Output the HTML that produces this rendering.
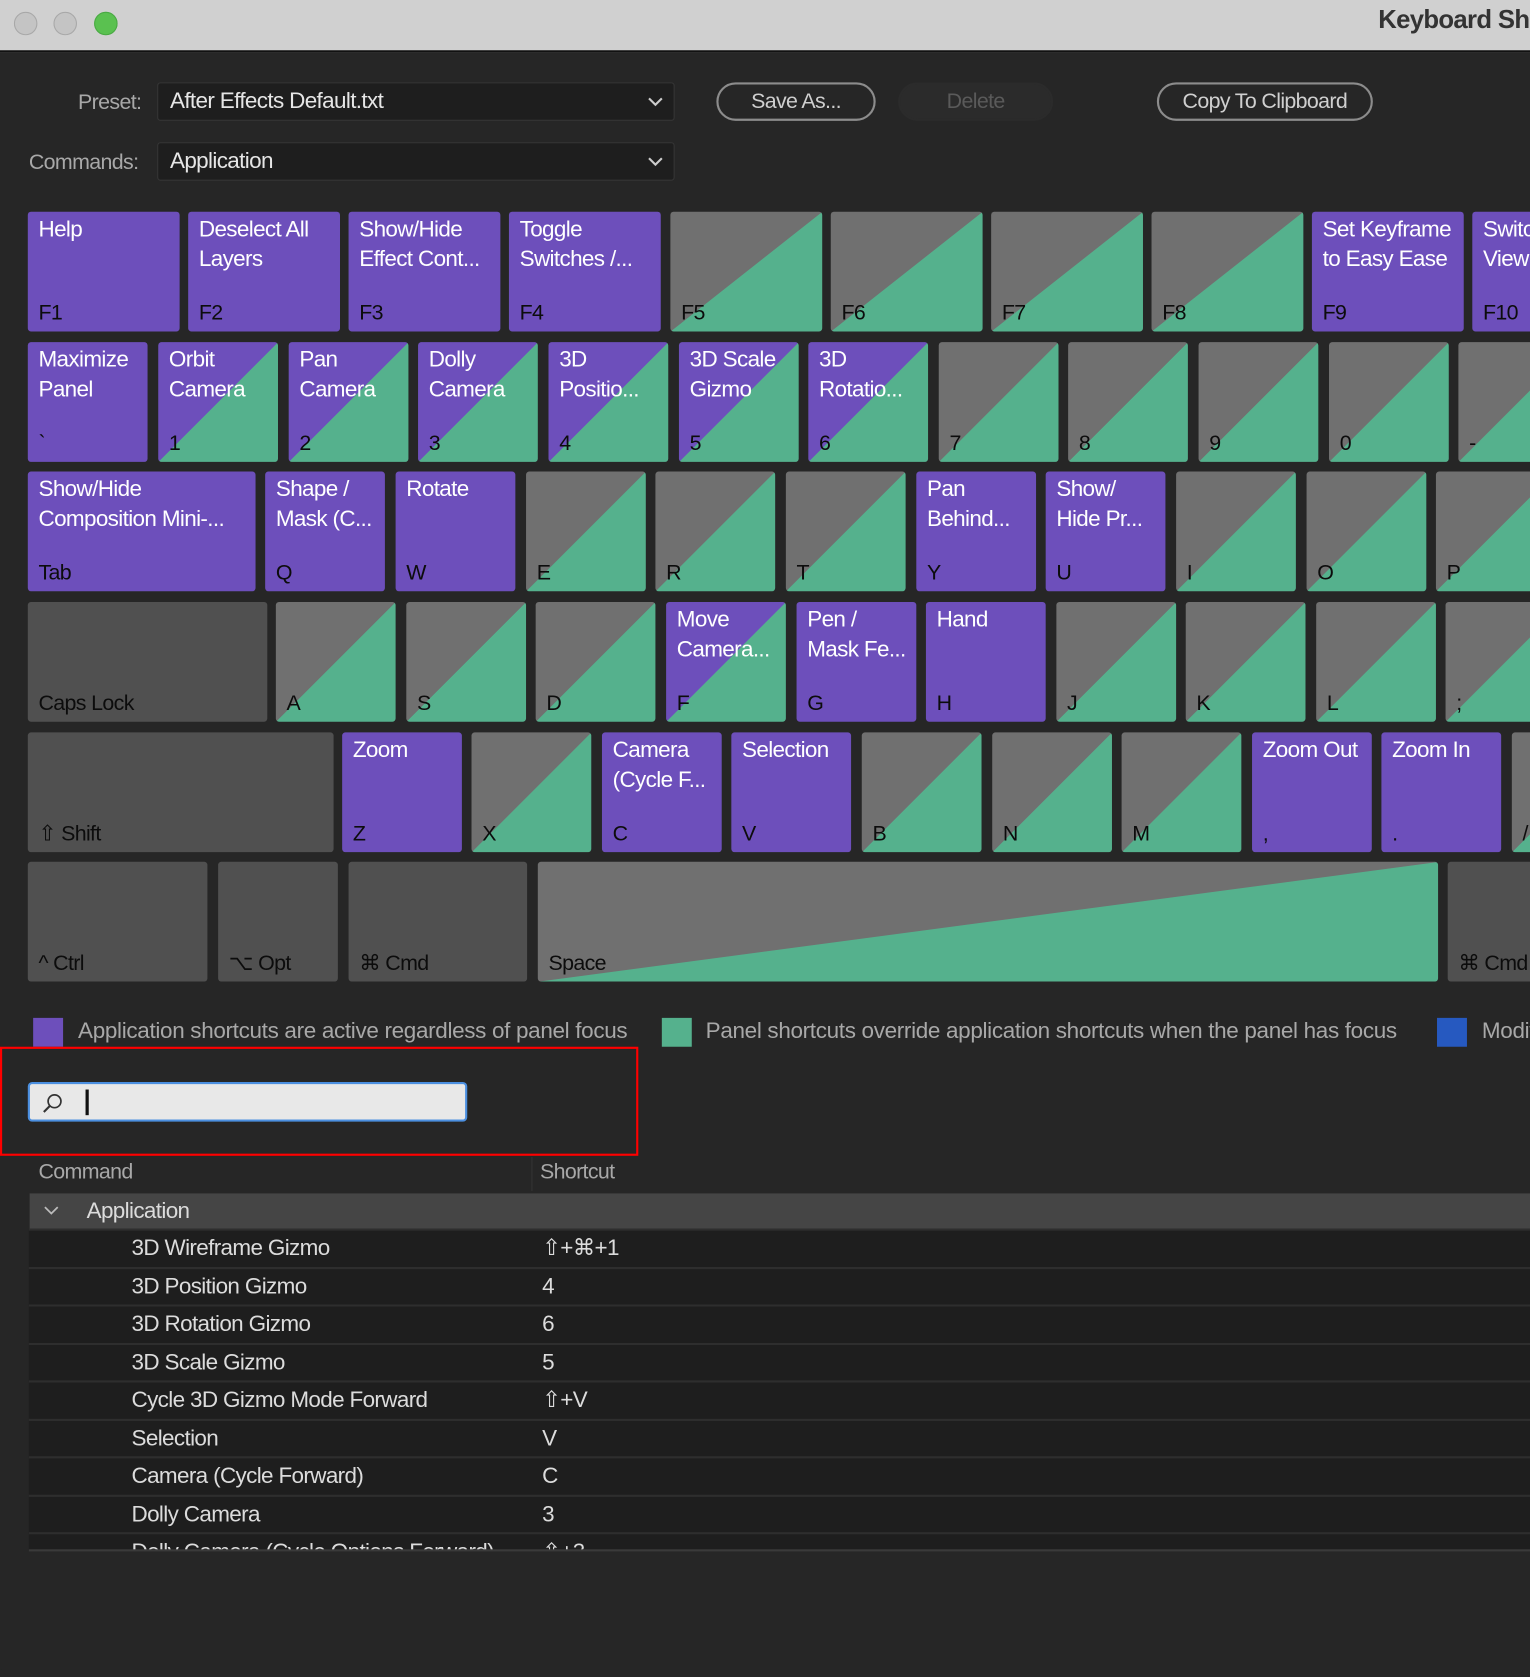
<!DOCTYPE html>
<html><head><meta charset="utf-8"><style>
html,body{margin:0;padding:0;background:#262626;overflow:hidden}
body{width:1530px;height:1676px}
#w{position:absolute;left:0;top:0;width:1431px;height:1568px;transform:scale(1.0692);transform-origin:0 0;background:#262626;font-family:"Liberation Sans","DejaVu Sans",sans-serif;letter-spacing:-0.6px;overflow:hidden;border-bottom-left-radius:12px}
.a{position:absolute}
#tb{left:0;top:0;width:1431px;height:47px;background:#d0d0d0;border-bottom:2px solid #111}
.tl{position:absolute;top:11px;width:22px;height:22px;border-radius:50%;background:#c4c4c4;box-shadow:inset 0 0 0 1px #a8a8a8}
.lbl{color:#a8a8a8;font-size:20px}
.dd{position:absolute;left:147px;width:484px;height:36px;background:#1e1e1e;border:1px solid #353535;border-radius:3px;box-sizing:border-box;color:#e6e6e6;font-size:21px;line-height:34px;padding-left:11px}
.dd svg{position:absolute;right:9px;top:12px}
.btn{position:absolute;top:77px;height:36px;box-sizing:border-box;border:2px solid #8c8c8c;border-radius:18px;color:#cfcfcf;font-size:20px;line-height:32px;text-align:center}
.k{position:absolute;height:112px;border-radius:3px;overflow:hidden;box-sizing:border-box}
.k .t{position:absolute;left:10px;top:3px;right:4px;color:#fff;font-size:21px;line-height:28px;white-space:nowrap}
.k .b{position:absolute;left:10px;bottom:5px;color:#0c0c0c;font-size:20px;line-height:24px;white-space:nowrap}
.p{background:#6d4fbb}
.s{background:linear-gradient(to bottom right,#707070 50%,#55b18d 50.2%)}
.ps{background:linear-gradient(to bottom right,#6d4fbb 50%,#55b18d 50.2%)}
.d{background:#505050}
.sq{position:absolute;top:952px;width:28px;height:27px}
.lg{position:absolute;top:951px;color:#a8a8a8;font-size:21px;line-height:28px;white-space:nowrap;letter-spacing:-0.3px}
.row{position:absolute;left:27px;width:1410px;height:34px;background:#1e1e1e;border-top:2px solid #2e2e2e;color:#dcdcdc;font-size:21px;line-height:34px}
.row span{position:absolute;left:96px}
.row i{position:absolute;left:480px;font-style:normal}
</style></head><body><div id="w">
<div id="tb" class="a">
<div class="tl" style="left:13px"></div><div class="tl" style="left:50px"></div><div class="tl" style="left:88px;background:#5ac150;box-shadow:inset 0 0 0 1px #4aa944"></div>
<div class="a" style="left:1289px;top:5px;font-size:24px;font-weight:bold;color:#333;white-space:nowrap">Keyboard Sh</div>
</div>
<div class="a lbl" style="left:73px;top:85px">Preset:</div>
<div class="dd" style="top:77px">After Effects Default.txt<svg width="16" height="10"><path d="M2 2l6 6 6-6" stroke="#ccc" stroke-width="2" fill="none"/></svg></div>
<div class="a lbl" style="left:27px;top:141px">Commands:</div>
<div class="dd" style="top:133px">Application<svg width="16" height="10"><path d="M2 2l6 6 6-6" stroke="#ccc" stroke-width="2" fill="none"/></svg></div>
<div class="btn" style="left:670px;width:149px">Save As...</div>
<div class="btn" style="left:840px;width:145px;border-color:#2b2b2b;background:#2b2b2b;color:#5a5a5a">Delete</div>
<div class="btn" style="left:1082px;width:202px">Copy To Clipboard</div>

<div class="k p" style="left:26px;top:198px;width:142px"><div class="t">Help</div><div class="b">F1</div></div>
<div class="k p" style="left:176px;top:198px;width:142px"><div class="t">Deselect All<br>Layers</div><div class="b">F2</div></div>
<div class="k p" style="left:326px;top:198px;width:142px"><div class="t">Show/Hide<br>Effect Cont...</div><div class="b">F3</div></div>
<div class="k p" style="left:476px;top:198px;width:142px"><div class="t">Toggle<br>Switches /...</div><div class="b">F4</div></div>
<div class="k s" style="left:627px;top:198px;width:142px"><div class="b">F5</div></div>
<div class="k s" style="left:777px;top:198px;width:142px"><div class="b">F6</div></div>
<div class="k s" style="left:927px;top:198px;width:142px"><div class="b">F7</div></div>
<div class="k s" style="left:1077px;top:198px;width:142px"><div class="b">F8</div></div>
<div class="k p" style="left:1227px;top:198px;width:142px"><div class="t">Set Keyframe<br>to Easy Ease</div><div class="b">F9</div></div>
<div class="k p" style="left:1377px;top:198px;width:142px"><div class="t">Switch<br>View</div><div class="b">F10</div></div>
<div class="k p" style="left:26px;top:320px;width:112px"><div class="t">Maximize<br>Panel</div><div class="b">`</div></div>
<div class="k ps" style="left:148px;top:320px;width:112px"><div class="t">Orbit<br>Camera</div><div class="b">1</div></div>
<div class="k ps" style="left:270px;top:320px;width:112px"><div class="t">Pan<br>Camera</div><div class="b">2</div></div>
<div class="k ps" style="left:391px;top:320px;width:112px"><div class="t">Dolly<br>Camera</div><div class="b">3</div></div>
<div class="k ps" style="left:513px;top:320px;width:112px"><div class="t">3D<br>Positio...</div><div class="b">4</div></div>
<div class="k ps" style="left:635px;top:320px;width:112px"><div class="t">3D Scale<br>Gizmo</div><div class="b">5</div></div>
<div class="k ps" style="left:756px;top:320px;width:112px"><div class="t">3D<br>Rotatio...</div><div class="b">6</div></div>
<div class="k s" style="left:878px;top:320px;width:112px"><div class="b">7</div></div>
<div class="k s" style="left:999px;top:320px;width:112px"><div class="b">8</div></div>
<div class="k s" style="left:1121px;top:320px;width:112px"><div class="b">9</div></div>
<div class="k s" style="left:1243px;top:320px;width:112px"><div class="b">0</div></div>
<div class="k s" style="left:1364px;top:320px;width:112px"><div class="b">-</div></div>
<div class="k p" style="left:26px;top:441px;width:213px"><div class="t">Show/Hide<br>Composition Mini-...</div><div class="b">Tab</div></div>
<div class="k p" style="left:248px;top:441px;width:112px"><div class="t">Shape /<br>Mask (C...</div><div class="b">Q</div></div>
<div class="k p" style="left:370px;top:441px;width:112px"><div class="t">Rotate</div><div class="b">W</div></div>
<div class="k s" style="left:492px;top:441px;width:112px"><div class="b">E</div></div>
<div class="k s" style="left:613px;top:441px;width:112px"><div class="b">R</div></div>
<div class="k s" style="left:735px;top:441px;width:112px"><div class="b">T</div></div>
<div class="k p" style="left:857px;top:441px;width:112px"><div class="t">Pan<br>Behind...</div><div class="b">Y</div></div>
<div class="k p" style="left:978px;top:441px;width:112px"><div class="t">Show/<br>Hide Pr...</div><div class="b">U</div></div>
<div class="k s" style="left:1100px;top:441px;width:112px"><div class="b">I</div></div>
<div class="k s" style="left:1222px;top:441px;width:112px"><div class="b">O</div></div>
<div class="k s" style="left:1343px;top:441px;width:112px"><div class="b">P</div></div>
<div class="k d" style="left:26px;top:563px;width:224px"><div class="b">Caps Lock</div></div>
<div class="k s" style="left:258px;top:563px;width:112px"><div class="b">A</div></div>
<div class="k s" style="left:380px;top:563px;width:112px"><div class="b">S</div></div>
<div class="k s" style="left:501px;top:563px;width:112px"><div class="b">D</div></div>
<div class="k ps" style="left:623px;top:563px;width:112px"><div class="t">Move<br>Camera...</div><div class="b">F</div></div>
<div class="k p" style="left:745px;top:563px;width:112px"><div class="t">Pen /<br>Mask Fe...</div><div class="b">G</div></div>
<div class="k p" style="left:866px;top:563px;width:112px"><div class="t">Hand</div><div class="b">H</div></div>
<div class="k s" style="left:988px;top:563px;width:112px"><div class="b">J</div></div>
<div class="k s" style="left:1109px;top:563px;width:112px"><div class="b">K</div></div>
<div class="k s" style="left:1231px;top:563px;width:112px"><div class="b">L</div></div>
<div class="k s" style="left:1352px;top:563px;width:112px"><div class="b">;</div></div>
<div class="k d" style="left:26px;top:685px;width:286px"><div class="b">⇧ Shift</div></div>
<div class="k p" style="left:320px;top:685px;width:112px"><div class="t">Zoom</div><div class="b">Z</div></div>
<div class="k s" style="left:441px;top:685px;width:112px"><div class="b">X</div></div>
<div class="k p" style="left:563px;top:685px;width:112px"><div class="t">Camera<br>(Cycle F...</div><div class="b">C</div></div>
<div class="k p" style="left:684px;top:685px;width:112px"><div class="t">Selection</div><div class="b">V</div></div>
<div class="k s" style="left:806px;top:685px;width:112px"><div class="b">B</div></div>
<div class="k s" style="left:928px;top:685px;width:112px"><div class="b">N</div></div>
<div class="k s" style="left:1049px;top:685px;width:112px"><div class="b">M</div></div>
<div class="k p" style="left:1171px;top:685px;width:112px"><div class="t">Zoom Out</div><div class="b">,</div></div>
<div class="k p" style="left:1292px;top:685px;width:112px"><div class="t">Zoom In</div><div class="b">.</div></div>
<div class="k s" style="left:1414px;top:685px;width:112px"><div class="b">/</div></div>
<div class="k d" style="left:26px;top:806px;width:168px"><div class="b">^ Ctrl</div></div>
<div class="k d" style="left:204px;top:806px;width:112px"><div class="b">⌥ Opt</div></div>
<div class="k d" style="left:326px;top:806px;width:167px"><div class="b">⌘ Cmd</div></div>
<div class="k s" style="left:503px;top:806px;width:842px"><div class="b">Space</div></div>
<div class="k d" style="left:1354px;top:806px;width:112px"><div class="b">⌘ Cmd</div></div>

<div class="sq" style="left:31px;background:#6d4fbb"></div>
<div class="lg" style="left:73px">Application shortcuts are active regardless of panel focus</div>
<div class="sq" style="left:619px;background:#55b18d"></div>
<div class="lg" style="left:660px">Panel shortcuts override application shortcuts when the panel has focus</div>
<div class="sq" style="left:1344px;background:#2659c0"></div>
<div class="lg" style="left:1386px">Modifier</div>

<div class="a" style="left:0;top:979px;width:597px;height:102px;border:2px solid #f00;box-sizing:border-box"></div>
<div class="a" style="left:26px;top:1012px;width:411px;height:37px;background:#e8e8e8;border:2px solid #4b8fe0;border-radius:4px;box-sizing:border-box">
<svg class="a" style="left:10px;top:7px" width="22" height="22"><circle cx="13" cy="9" r="6" stroke="#333" stroke-width="1.6" fill="none"/><path d="M9 13L3 19" stroke="#333" stroke-width="2"/></svg>
<div class="a" style="left:52px;top:5px;width:3px;height:24px;background:#111"></div>
</div>

<div class="a" style="left:36px;top:1085px;color:#a8a8a8;font-size:20px">Command</div>
<div class="a" style="left:497px;top:1082px;width:1px;height:32px;background:#333"></div>
<div class="a" style="left:505px;top:1085px;color:#a8a8a8;font-size:20px">Shortcut</div>
<div class="a" style="left:27px;top:1116px;width:1410px;height:334px;background:#1e1e1e;overflow:hidden;border-left:1px solid #333">
<div class="a" style="left:0;top:0;width:1410px;height:33px;background:#454545;color:#dcdcdc;font-size:21px;line-height:33px">
<svg class="a" style="left:12px;top:11px" width="16" height="10"><path d="M2 2l6 6 6-6" stroke="#bbb" stroke-width="1.6" fill="none"/></svg>
<span class="a" style="left:53px">Application</span></div>
</div>
<div class="row" style="top:1149px"><span>3D Wireframe Gizmo</span><i>⇧+⌘+1</i></div>
<div class="row" style="top:1185px"><span>3D Position Gizmo</span><i>4</i></div>
<div class="row" style="top:1220px"><span>3D Rotation Gizmo</span><i>6</i></div>
<div class="row" style="top:1256px"><span>3D Scale Gizmo</span><i>5</i></div>
<div class="row" style="top:1291px"><span>Cycle 3D Gizmo Mode Forward</span><i>⇧+V</i></div>
<div class="row" style="top:1327px"><span>Selection</span><i>V</i></div>
<div class="row" style="top:1362px"><span>Camera (Cycle Forward)</span><i>C</i></div>
<div class="row" style="top:1398px"><span>Dolly Camera</span><i>3</i></div>
<div class="row" style="top:1433px;height:15px;overflow:hidden"><span>Dolly Camera (Cycle Options Forward)</span><i>⇧+3</i></div>
<div class="a" style="left:27px;top:1449px;width:1410px;height:2px;background:#3a3a3a"></div>
</div></body></html>
